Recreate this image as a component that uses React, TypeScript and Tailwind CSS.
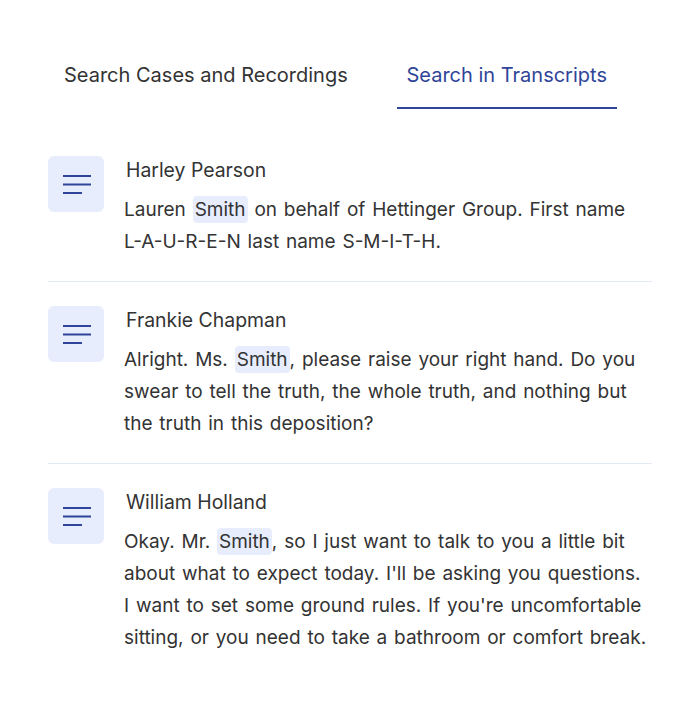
import { ReactNode } from "react";

interface Result {
  speaker: string;
  text: ReactNode;
}

const Highlight = ({ children }: { children: ReactNode }) => (
  <span className="bg-[#e7edfd] rounded px-[2px] py-[2px]">{children}</span>
);

const results: Result[] = [
  {
    speaker: "Harley Pearson",
    text: (
      <>
        Lauren <Highlight>Smith</Highlight> on behalf of Hettinger Group. First name{" "}
        <span className="whitespace-nowrap">L-A-U-R-E-N</span> last name{" "}
        <span className="whitespace-nowrap">S-M-I-T-H.</span>
      </>
    ),
  },
  {
    speaker: "Frankie Chapman",
    text: (
      <>
        Alright. Ms. <Highlight>Smith</Highlight>, please raise your right hand. Do you swear
        to tell the truth, the whole truth, and nothing but the truth in this deposition?
      </>
    ),
  },
  {
    speaker: "William Holland",
    text: (
      <>
        Okay. Mr. <Highlight>Smith</Highlight>, so I just want to talk to you a little bit
        about what to expect today. I'll be asking you questions. I want to set some ground
        rules. If you're uncomfortable sitting, or you need to take a bathroom or comfort
        break.
      </>
    ),
  },
];

const TranscriptIcon = () => (
  <div className="w-14 h-14 shrink-0 rounded-md bg-[#e7edfd] flex items-center justify-center">
    <svg width="56" height="56" viewBox="0 0 56 56" fill="none">
      <path
        d="M15 20h28M15 28.5h28M15 37h19"
        stroke="#2f4599"
        strokeWidth="1.8"
      />
    </svg>
  </div>
);

const ResultRow = ({ r, last }: { r: Result; last: boolean }) => (
  <div
    className={
      "flex gap-5 pt-6 pb-[23px] " + (last ? "" : "border-b border-[#e2eaf6]")
    }
  >
    <TranscriptIcon />
    <div className="flex-1 min-w-0 pt-[1px] pr-1">
      <div className="text-[19.4px] leading-[26px] text-[#333] pl-[2px]">{r.speaker}</div>
      <p className="mt-[11px] text-[19px] leading-8 text-[#333] [word-spacing:1.5px]">
        {r.text}
      </p>
    </div>
  </div>
);

export default function App() {
  return (
    <div
      className="w-[700px] min-h-[720px] bg-white"
      style={{ fontFamily: "Inter, 'Noto Sans', sans-serif" }}
    >
      <div className="pl-12 pr-12">
        <div className="flex pt-[61px]">
          <button className="pl-4 pr-4 pb-[18px] text-[20px] leading-7 text-[#333] border-b-2 border-transparent">
            Search Cases and Recordings
          </button>
          <button className="ml-[33px] px-2 pb-[18px] text-[20px] leading-7 text-[#2f4599] border-b-2 border-[#2f4599] w-[220px]">
            Search in Transcripts
          </button>
        </div>
        <div className="mt-[23px]">
          {results.map((r, i) => (
            <ResultRow key={r.speaker} r={r} last={i === results.length - 1} />
          ))}
        </div>
      </div>
    </div>
  );
}
